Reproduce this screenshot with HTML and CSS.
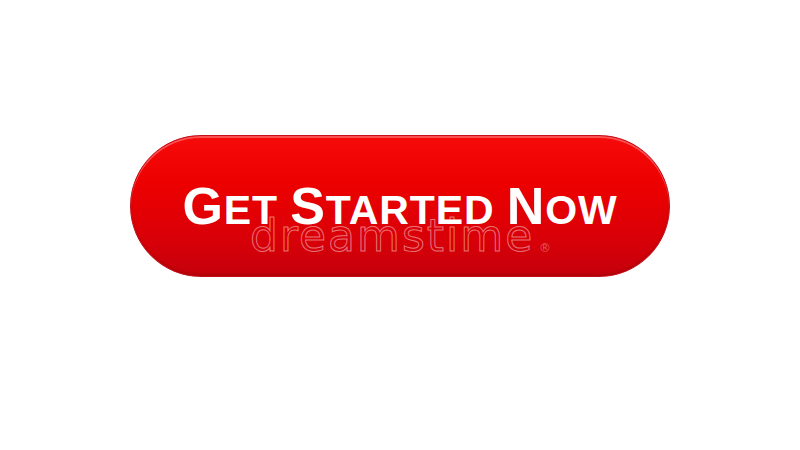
FILE: index.html
```html
<!DOCTYPE html>
<html lang="en">

<head>
  <meta charset="UTF-8">
  <meta name="viewport" content="width=device-width, initial-scale=1.0">
  <title>Get Started Now</title>
  <link rel="stylesheet" href="styles.css">
</head>

<body>

  <div class="stage">
    <a class="cta-button" href="#">
      <span class="label"><span class="cap">G</span>et <span class="cap">S</span>tarted <span class="cap">N</span>ow</span>
      <svg class="mark" width="330" height="56" viewBox="0 0 330 56">
        <text x="1" y="42" class="mark-word">dreamstime</text>
        <text x="290" y="43" class="mark-reg">®</text>
      </svg>
    </a>
  </div>

</body>

</html>
```

FILE: styles.css
```css
body {
  margin: 0;
  background: #ffffff;
  font-family: "Liberation Sans", Arial, sans-serif;
}

.stage {
  display: flex;
  justify-content: center;
  padding-top: 135px;
}

/* red pill button */
.cta-button {
  position: relative;
  display: flex;
  align-items: center;
  justify-content: center;
  width: 540px;
  height: 142px;
  box-sizing: border-box;
  border-radius: 71px;
  border: 1px solid #c3101c;
  background: linear-gradient(to bottom, #f60a0a 0%, #ec0000 35%, #d80008 75%, #c4000c 100%);
  box-shadow: inset 0 2px 0 rgba(255, 140, 140, 0.55), inset 0 -2px 2px rgba(120, 0, 0, 0.25);
  text-decoration: none;
}

.label {
  position: relative;
  z-index: 1;
  color: #ffffff;
  font-weight: bold;
  font-size: 41px;
  text-transform: uppercase;
  letter-spacing: 0.9px;
  line-height: 1;
}

.label .cap {
  font-size: 52px;
}

/* faint outlined watermark over the button */
.mark {
  position: absolute;
  left: 118px;
  top: 73px;
}

.mark-word {
  font-family: "DejaVu Sans", sans-serif;
  font-size: 44px;
  letter-spacing: 2px;
  fill: none;
  stroke: #ffffff;
  stroke-opacity: 0.45;
  stroke-width: 1;
}

.mark-reg {
  font-family: "DejaVu Sans", sans-serif;
  font-size: 12px;
  fill: #ffffff;
  fill-opacity: 0.35;
}
```
